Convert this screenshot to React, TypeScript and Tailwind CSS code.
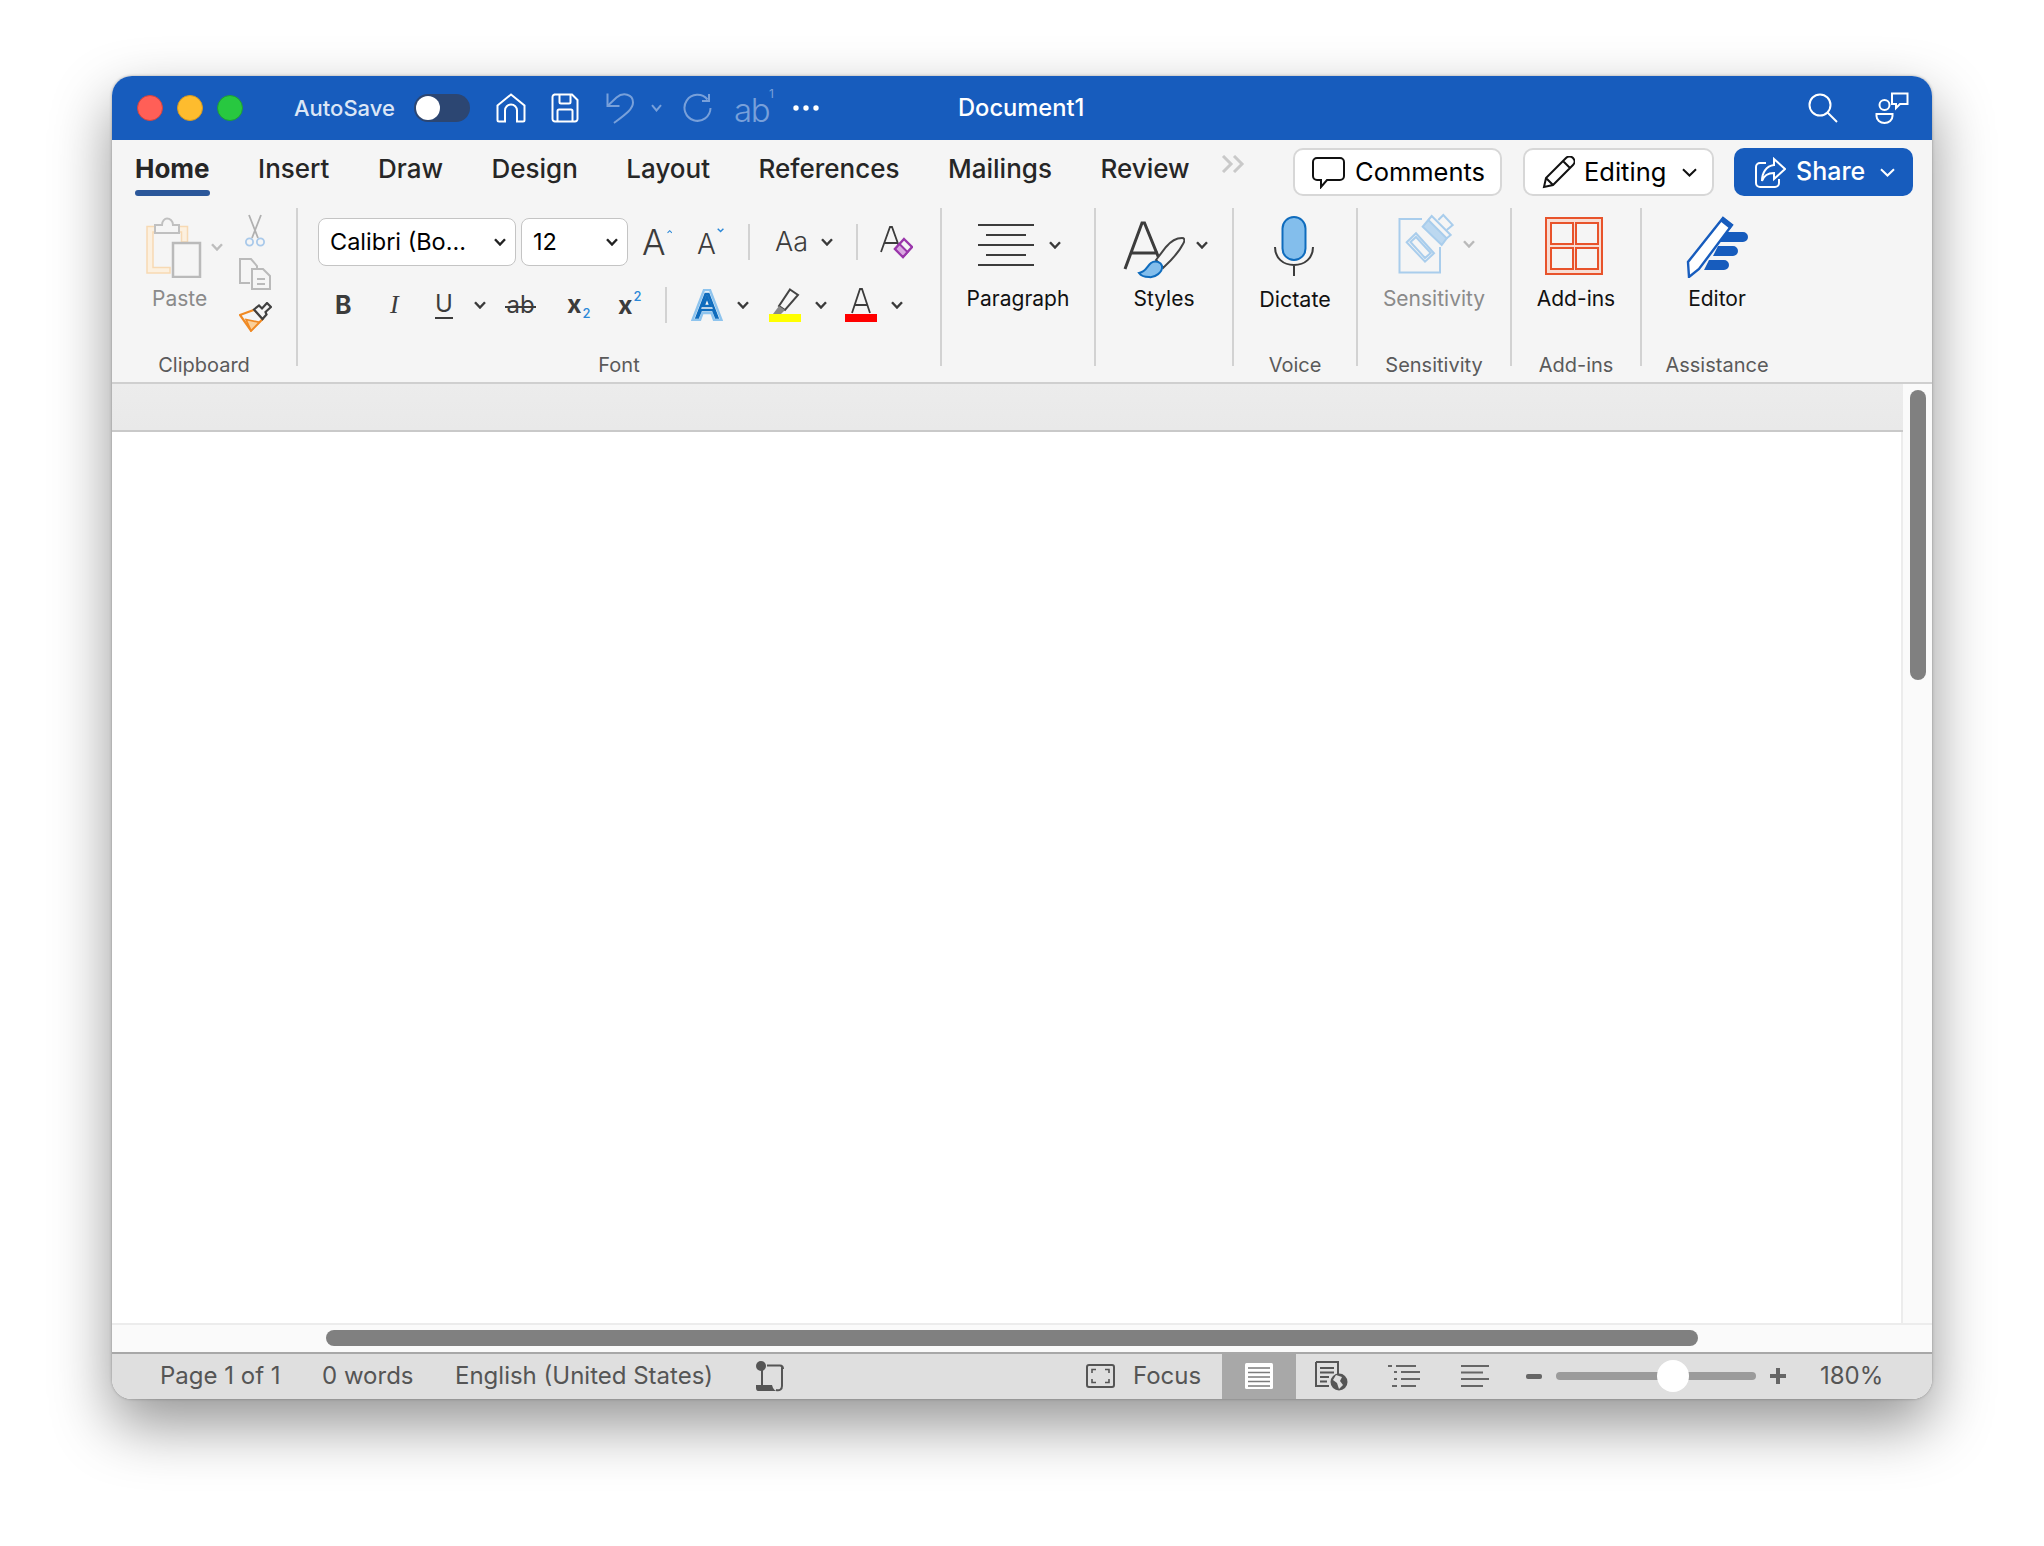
import type { ReactNode } from "react";

const TABS = ["Insert", "Draw", "Design", "Layout", "References", "Mailings", "Review"];

function Chev({ color = "#3a3a3a", w = 12, h = 8, sw = 2.4, className = "" }: { color?: string; w?: number; h?: number; sw?: number; className?: string }) {
  return (
    <svg width={w} height={h} viewBox={`0 0 ${w} ${h}`} className={`shrink-0 ${className}`} fill="none" stroke={color} strokeWidth={sw}>
      <path d={`M1 1.2 L${w / 2} ${h - 1.5} L${w - 1} 1.2`} />
    </svg>
  );
}

function Sep({ className = "" }: { className?: string }) {
  return <div className={`w-[2px] shrink-0 bg-[#d2d2d2] ${className}`} />;
}

function Group({ width, label, children }: { width: string; label?: string; children: ReactNode }) {
  return (
    <div className={`flex shrink-0 flex-col ${width}`}>
      <div className="h-[144px]">{children}</div>
      <div className="h-[26px] text-center text-[20px] leading-[26px] text-[#5a5a5a]">{label}</div>
    </div>
  );
}

function TitleIcons() {
  return (
    <>
      <svg width="30" height="30" viewBox="0 0 30 30" fill="none" stroke="#fff" strokeWidth="2" className="ml-[26px] shrink-0">
        <path d="M1.5 12.5 L15 1.5 L28.5 12.5 V27 a1.5 1.5 0 0 1 -1.5 1.5 H21 V17.5 a6 6 0 0 0 -12 0 V28.5 H3 a1.5 1.5 0 0 1 -1.5 -1.5 Z" />
      </svg>
      <svg width="28" height="30" viewBox="0 0 28 30" fill="none" stroke="#fff" strokeWidth="2" className="ml-[25px] shrink-0">
        <path d="M3 1.5 H21 L26.5 7 V26 a2.5 2.5 0 0 1 -2.5 2.5 H4 a2.5 2.5 0 0 1 -2.5 -2.5 V4 a2.5 2.5 0 0 1 2.5 -2.5 Z" />
        <path d="M8.5 1.5 V9 a1.5 1.5 0 0 0 1.5 1.5 H18 a1.5 1.5 0 0 0 1.5 -1.5 V1.5" />
        <path d="M6.5 28.5 V18 a1.5 1.5 0 0 1 1.5 -1.5 H20 a1.5 1.5 0 0 1 1.5 1.5 V28.5" />
      </svg>
      <svg width="28" height="32" viewBox="0 0 28 32" fill="none" stroke="#78a0da" strokeWidth="2" className="ml-[27px] shrink-0">
        <path d="M1.5 1.5 V14 H13.5" />
        <path d="M2 13.5 L10.5 5.5 C17 0 27 2 27 10.5 C27 17 20 22 8 31" />
      </svg>
      <Chev color="#78a0da" w={11} h={8} sw={2} className="ml-[17px]" />
      <svg width="29" height="30" viewBox="0 0 29 30" fill="none" stroke="#78a0da" strokeWidth="2" className="ml-[21px] shrink-0">
        <path d="M24.5 6.5 A13 13 0 1 0 27.5 15" />
        <path d="M26 1 V8 H19" />
      </svg>
      <div className="ml-[22px] flex w-[38px] shrink-0 items-start text-[#78a0da]">
        <span className="mt-[3px] text-[33px] font-light leading-[32px] tracking-[-1.5px]">ab</span>
        <span className="-mt-[4px] text-[12px] leading-[14px]">1</span>
      </div>
      <svg width="26" height="6" viewBox="0 0 26 6" fill="#fff" className="ml-[21px] shrink-0">
        <circle cx="3" cy="3" r="2.7" />
        <circle cx="13" cy="3" r="2.7" />
        <circle cx="23" cy="3" r="2.7" />
      </svg>
    </>
  );
}

function PasteIcon() {
  return (
    <svg width="56" height="62" viewBox="0 0 56 62" fill="none" className="shrink-0">
      <path d="M1 10.5 H41.5 V26 H35.5 V16 H7 V51.5 H24 V57 H1 Z" fill="#fcf0df" stroke="#f7d9b3" strokeWidth="1.5" />
      <path d="M9 17 V9 H16 C16 4.5 19 2.5 21 2.5 C24 2.5 27 5 27 9 H33 V17 Z" fill="#f5f5f5" stroke="#c0c0c0" strokeWidth="2" />
      <rect x="27" y="27" width="27" height="34" fill="#f5f5f5" stroke="#bababa" strokeWidth="2.5" />
    </svg>
  );
}

function SmallClipTools() {
  return (
    <div className="ml-[16px] flex w-[34px] flex-col items-center">
      <svg width="22" height="34" viewBox="0 0 22 34" fill="none" strokeWidth="1.8">
        <path d="M5 1 L14 24 M17 1 L8 24" stroke="#b0b0b0" />
        <circle cx="5.5" cy="28" r="3.6" stroke="#a9c9ea" />
        <circle cx="16.5" cy="28" r="3.6" stroke="#a9c9ea" />
      </svg>
      <svg width="32" height="32" viewBox="0 0 32 32" fill="none" stroke="#bababa" strokeWidth="2" className="mt-[10px]">
        <path d="M11 25 H1 V1 H12 L18 8 V11" />
        <path d="M13 11 H24 L31 18 V31 H13 Z" />
        <path d="M18 21 H26 M18 26 H26" />
      </svg>
      <svg width="33" height="30" viewBox="0 0 33 30" fill="none" className="mt-[12px]">
        <path d="M1 13 L15.3 7.7 L23.7 17 L12 28.7 Z" fill="#f5f5f5" stroke="#f08a24" strokeWidth="2.2" />
        <path d="M7 17.5 L20.3 20.3 L12 28.7 Z" fill="#fbd09a" stroke="#f08a24" strokeWidth="1.6" />
        <path d="M15 7.5 L20 3.5 L23 6.5 L28 1 L32 5 L26.5 10 L27.5 12.5 L23.5 17 Z" fill="#f5f5f5" stroke="#404040" strokeWidth="2.2" />
      </svg>
    </div>
  );
}

function Select({ width, text }: { width: string; text: string }) {
  return (
    <div className={`flex h-[48px] items-center justify-between rounded-[8px] border-[1.5px] border-[#c4c4c4] bg-white pl-[11px] pr-[9px] text-[23.5px] text-black ${width}`}>
      <span className="whitespace-nowrap">{text}</span>
      <Chev color="#222" />
    </div>
  );
}

function FontGroup() {
  return (
    <div className="flex flex-col pt-[10px]">
      <div className="flex h-[48px] items-center pl-[20px]">
        <Select width="w-[198px]" text="Calibri (Bo..." />
        <div className="w-[5px]" />
        <Select width="w-[107px]" text="12" />
        <div className="ml-[14px] flex w-[30px] items-start">
          <span className="text-[35px] font-light leading-[34px] text-[#3c3c3c]">A</span>
          <svg width="10" height="7" viewBox="0 0 10 7" fill="none" stroke="#2b88d8" strokeWidth="2" className="ml-[1px] mt-[3px]"><path d="M1 6 L5 2 L9 6" /></svg>
        </div>
        <div className="ml-[25px] flex w-[27px] items-start">
          <span className="mt-[3px] text-[28px] font-light leading-[30px] text-[#3c3c3c]">A</span>
          <svg width="10" height="7" viewBox="0 0 10 7" fill="none" stroke="#2b88d8" strokeWidth="2" className="ml-[1px] mt-[1px]"><path d="M1 1 L5 5 L9 1" /></svg>
        </div>
        <Sep className="ml-[24px] h-[36px]" />
        <span className="ml-[25px] w-[36px] whitespace-nowrap text-[27px] font-light text-[#3c3c3c]">Aa</span>
        <Chev className="ml-[10px]" />
        <Sep className="ml-[23px] h-[36px]" />
        <svg width="33" height="34" viewBox="0 0 33 34" fill="none" className="ml-[22px]">
          <path d="M1 27 L10 2 H12 L21 27 M4.5 18 H17.5" stroke="#3c3c3c" strokeWidth="1.8" />
          <path d="M24 14 L32 22 L23 32 L15 24 Z" fill="#f5f5f5" stroke="#9a36ab" strokeWidth="2.4" />
          <path d="M19.5 19 L27.5 27 L23 32 L15 24 Z" fill="#d9a8e0" stroke="#9a36ab" strokeWidth="2" />
        </svg>
      </div>
      <div className="mt-[19px] flex h-[40px] items-center pl-[37px]">
        <span className="w-[14px] text-[25px] font-bold leading-none text-[#3c3c3c]">B</span>
        <span className="ml-[41px] w-[14px] font-['Liberation_Serif',serif] text-[26px] italic leading-none text-[#3c3c3c]">I</span>
        <span className="ml-[31px] w-[18px] border-b-2 border-[#3c3c3c] text-center text-[24px] leading-[26px] text-[#3c3c3c]">U</span>
        <Chev className="ml-[21px]" />
        <span className="relative ml-[19px] w-[31px] text-center text-[24px] leading-[30px] text-[#3c3c3c]">
          ab
          <span className="absolute left-0 top-[16px] h-[1.5px] w-full bg-[#3c3c3c]" />
        </span>
        <span className="ml-[31px] flex w-[21px] items-start">
          <span className="text-[25px] font-bold leading-[28px] text-[#3c3c3c]">x</span>
          <span className="ml-[1px] mt-[16px] text-[13px] font-medium leading-[14px] text-[#2b88d8]">2</span>
        </span>
        <span className="ml-[30px] flex w-[21px] items-start">
          <span className="text-[25px] font-bold leading-[28px] text-[#3c3c3c]">x</span>
          <span className="ml-[1px] -mt-[2px] text-[13px] font-medium leading-[14px] text-[#2b88d8]">2</span>
        </span>
        <Sep className="ml-[26px] h-[36px]" />
        <svg width="32" height="32" viewBox="0 0 32 32" fill="none" className="ml-[24px]">
          <path d="M1.5 31 L13 1 H19 L30.5 31 H23 L20.5 24 H11.5 L9 31 Z" fill="#fff" stroke="#8ec4ee" strokeWidth="2.4" />
          <path d="M5.5 28.5 L14.5 5 H17.5 L26.5 28.5 H25 L22 21 H10 L7 28.5 Z M12.5 17 L16 8 L19.5 17 Z" fill="#f5f5f5" stroke="#0f6cbd" strokeWidth="2.4" />
        </svg>
        <Chev className="ml-[14px]" />
        <div className="ml-[20px] flex w-[32px] flex-col items-center">
          <svg width="30" height="26" viewBox="0 0 30 26" fill="none">
            <path d="M20 1.5 L28 7 L15 22 L9 18 Z" fill="#f5f5f5" stroke="#444" strokeWidth="2" />
            <path d="M9 18 L15 22 L11 26 H3 Z" fill="#8a8a8a" />
          </svg>
          <div className="h-[8px] w-[32px] bg-[#ffff00]" />
        </div>
        <Chev className="ml-[14px]" />
        <div className="ml-[18px] flex w-[32px] flex-col items-center">
          <svg width="22" height="26" viewBox="0 0 22 26" fill="none" stroke="#3c3c3c" strokeWidth="1.8">
            <path d="M2 25 L10 1 H12 L20 25 M5 17 H17" />
          </svg>
          <div className="h-[8px] w-[32px] bg-[#ff0000]" />
        </div>
        <Chev className="ml-[14px]" />
      </div>
    </div>
  );
}

function StatusIcons() {
  return (
    <>
      <svg width="29" height="24" viewBox="0 0 29 24" fill="none" stroke="#555" strokeWidth="2" className="shrink-0">
        <rect x="1" y="1" width="27" height="22" rx="2" />
        <path d="M6 9 V5.5 H10 M19 5.5 H23 V9 M6 15 V18.5 H10 M19 18.5 H23 V15" strokeWidth="1.6" />
      </svg>
      <span className="ml-[18px] w-[68px] whitespace-nowrap">Focus</span>
      <div className="ml-[21px] flex h-[46px] w-[74px] items-center justify-center bg-[#a8a8a8]">
        <svg width="28" height="26" viewBox="0 0 28 26" fill="#fff">
          <rect x="0" y="0" width="28" height="26" rx="1.5" />
          <path d="M3 5 H25 M3 9.5 H25 M3 14 H25 M3 18.5 H25 M3 23 H25" stroke="#7c7c7c" strokeWidth="1.7" />
        </svg>
      </div>
      <svg width="33" height="30" viewBox="0 0 33 30" fill="none" className="ml-[19px] shrink-0">
        <path d="M1 1 H23 V14 M1 1 V25 H14" stroke="#555" strokeWidth="2" />
        <path d="M5 7 H19 M5 11.5 H19 M5 16 H14 M5 20.5 H12" stroke="#555" strokeWidth="2" />
        <circle cx="24" cy="21" r="8.5" fill="#555" />
        <path d="M21 14 L27 16 L25 20 L28 24 L24 28 L22 22 L18 19 Z" fill="#dedede" />
      </svg>
      <svg width="32" height="24" viewBox="0 0 32 24" fill="none" stroke="#666" strokeWidth="2" className="ml-[40px] shrink-0">
        <path d="M0 2 H4 M8 2 H28 M6 8 H9 M13 8 H32 M6 15 H9 M13 15 H32 M4 22 H9 M13 22 H28" />
      </svg>
      <svg width="28" height="24" viewBox="0 0 28 24" fill="none" stroke="#666" strokeWidth="2.2" className="ml-[41px] shrink-0">
        <path d="M0 2 H28 M0 8.5 H22 M0 15 H28 M0 22 H22" />
      </svg>
    </>
  );
}

export default function App() {
  return (
    <div className="h-[1546px] w-[2044px] overflow-hidden bg-white pl-[112px] pt-[76px] font-['Inter',sans-serif]">
      <div className="flex h-[1323px] w-[1820px] flex-col overflow-hidden rounded-[20px] shadow-[0_26px_60px_rgba(0,0,0,0.42),0_0_3px_rgba(0,0,0,0.3)]">
        {/* TITLE BAR */}
        <div className="flex h-[64px] shrink-0 items-center bg-[#175cbd] text-white">
          <div className="ml-[25px] h-[26px] w-[26px] rounded-full border border-[#d8433b] bg-[#ff5f57]" />
          <div className="ml-[14px] h-[26px] w-[26px] rounded-full border border-[#d99a1e] bg-[#febc2e]" />
          <div className="ml-[14px] h-[26px] w-[26px] rounded-full border border-[#1e9d35] bg-[#28c840]" />
          <span className="ml-[51px] w-[101px] whitespace-nowrap text-[22px] font-medium text-[#dbe6f6]">AutoSave</span>
          <div className="ml-[19px] flex h-[28px] w-[56px] items-center rounded-full bg-[#2c4672] pl-[2px]">
            <div className="h-[24px] w-[24px] rounded-full bg-white" />
          </div>
          <TitleIcons />
          <span className="ml-[139px] w-[126px] whitespace-nowrap text-[23.7px] font-medium">Document1</span>
          <div className="flex-1" />
          <svg width="30" height="30" viewBox="0 0 30 30" fill="none" stroke="#fff" strokeWidth="2" className="shrink-0">
            <circle cx="12" cy="12" r="10.5" />
            <path d="M19.5 19.5 L29 29" />
          </svg>
          <svg width="34" height="32" viewBox="0 0 34 32" fill="none" stroke="#fff" strokeWidth="2" className="ml-[37px] mr-[23px] shrink-0">
            <circle cx="9.5" cy="13" r="5" />
            <path d="M1.5 22 H17.5 V24 A8 7 0 0 1 1.5 24 Z" />
            <path d="M17 1.5 H32.5 V12 H25 L21 16 V12 H17 Z" />
          </svg>
        </div>

        {/* RIBBON */}
        <div className="h-[244px] shrink-0 border-b-[2px] border-[#cfcfcf] bg-[#f5f5f5]">
          <div className="flex h-[68px] items-start pl-[23px] pr-[19px]">
            <div className="flex items-start gap-[48.5px] pt-[13px] text-[26px] font-medium leading-[32px] text-[#262626]">
              <div className="flex flex-col">
                <span className="font-bold">Home</span>
                <div className="mt-[5px] h-[6px] rounded-full bg-[#2b579a]" />
              </div>
              {TABS.map((t) => (
                <span key={t}>{t}</span>
              ))}
            </div>
            <svg width="24" height="18" viewBox="0 0 24 18" fill="none" stroke="#c9c9c9" strokeWidth="3" className="ml-[31px] mt-[15px] shrink-0">
              <path d="M2 1 L10 9 L2 17 M13 1 L21 9 L13 17" />
            </svg>
            <div className="ml-auto mt-[8px] flex items-start">
              <div className="flex h-[48px] w-[209px] items-center rounded-[10px] border-2 border-[#d7d7d7] bg-white pl-[17px] text-[25.5px] text-black">
                <svg width="33" height="33" viewBox="0 0 33 33" fill="none" stroke="#111" strokeWidth="2" className="shrink-0">
                  <path d="M5 2 H28 A4 4 0 0 1 32 6 V20 A4 4 0 0 1 28 24 H15 L9 31 V24 H5 A4 4 0 0 1 1 20 V6 A4 4 0 0 1 5 2 Z" />
                </svg>
                <span className="ml-[10px]">Comments</span>
              </div>
              <div className="ml-[21px] flex h-[48px] w-[191px] items-center rounded-[10px] border-2 border-[#d7d7d7] bg-white pl-[17px] text-[25.5px] text-black">
                <svg width="33" height="33" viewBox="0 0 33 33" fill="none" stroke="#111" strokeWidth="2" className="shrink-0">
                  <path d="M2 31 L4 22 L24 2 A3.5 3.5 0 0 1 31 9 L11 29 Z M4 22 L11 29 M21 5 L28 12" />
                </svg>
                <span className="ml-[9px]">Editing</span>
                <Chev color="#111" w={15} h={9} sw={2} className="ml-[16px]" />
              </div>
              <div className="ml-[20px] flex h-[48px] w-[179px] items-center rounded-[10px] bg-[#175cbd] pl-[21px] text-[25px] font-medium text-white">
                <svg width="31" height="31" viewBox="0 0 31 31" fill="none" stroke="#fff" strokeWidth="2" className="shrink-0">
                  <path d="M11 6 H5 A4 4 0 0 0 1 10 V26 A4 4 0 0 0 5 30 H20 A4 4 0 0 0 24 26 V22" />
                  <path d="M19 2 L30 12 L19 22 V16 C13 16 9 18 7 24 C7 16 11 9 19 8 Z" />
                </svg>
                <span className="ml-[10px]">Share</span>
                <Chev color="#fff" w={15} h={9} sw={2} className="ml-[15px]" />
              </div>
            </div>
          </div>

          <div className="flex h-[174px] items-start">
            <Group width="w-[184px]" label="Clipboard">
              <div className="flex pl-[34px] pt-[6px]">
                <div className="flex w-[76px] flex-col">
                  <div className="mt-[2px] flex items-start">
                    <PasteIcon />
                    <Chev color="#bdbdbd" className="ml-[9px] mt-[27px]" />
                  </div>
                  <span className="ml-[6px] mt-[8px] whitespace-nowrap text-[21px] leading-[26px] text-[#8a8a8a]">Paste</span>
                </div>
                <SmallClipTools />
              </div>
            </Group>
            <Sep className="h-[158px]" />
            <Group width="w-[642px]" label="Font">
              <FontGroup />
            </Group>
            <Sep className="h-[158px]" />
            <Group width="w-[152px]">
              <div className="flex flex-col items-center pt-[16px]">
                <div className="flex items-center pl-[2px]">
                  <svg width="56" height="42" viewBox="0 0 56 42" fill="none" stroke="#3c3c3c" strokeWidth="2">
                    <path d="M0 1 H56 M8 11 H48 M0 21 H56 M8 31 H48 M0 41 H56" />
                  </svg>
                  <Chev className="ml-[15px]" />
                </div>
                <span className="mt-[20px] text-[21px] leading-[26px] text-[#111]">Paragraph</span>
              </div>
            </Group>
            <Sep className="h-[158px]" />
            <Group width="w-[136px]">
              <div className="flex flex-col items-center pt-[8px]">
                <div className="flex items-center pl-[2px]">
                  <svg width="62" height="63" viewBox="0 0 62 63" fill="none">
                    <path d="M2 53 L19 7 H21.5 L37 45 M9 37 H35" stroke="#3c3c3c" strokeWidth="3" />
                    <path d="M33 44 L43 31 C48 25 54 22 59 22 C62 22 62 25 60 28 C57 34 52 41 40 52 Z" fill="#f5f5f5" stroke="#444" strokeWidth="2" />
                    <path d="M16 57 C23 56 24 50 28 47 C32 44 38 46 39 50 C40 56 32 62 26 61 C22 61 18 60 16 57 Z" fill="#83beec" stroke="#0f6cbd" strokeWidth="2" />
                  </svg>
                  <Chev className="ml-[11px] -mt-[6px]" />
                </div>
                <span className="mt-[7px] text-[21px] leading-[26px] text-[#111]">Styles</span>
              </div>
            </Group>
            <Sep className="h-[158px]" />
            <Group width="w-[122px]" label="Voice">
              <div className="flex flex-col items-center pt-[8px]">
                <svg width="40" height="61" viewBox="0 0 40 61" fill="none" className="mr-[2px]">
                  <rect x="8.5" y="1" width="23" height="43" rx="11.5" fill="#83beec" stroke="#0f6cbd" strokeWidth="2" />
                  <path d="M1 31 C1 42 9 49 20 49 C31 49 39 42 39 31 M20 49 V60" stroke="#3c3c3c" strokeWidth="2" />
                </svg>
                <span className="mt-[9px] text-[21.5px] leading-[26px] text-[#111]">Dictate</span>
              </div>
            </Group>
            <Sep className="h-[158px]" />
            <Group width="w-[152px]" label="Sensitivity">
              <div className="flex flex-col items-center pt-[5px]">
                <div className="flex items-center pl-[4px]">
                  <svg width="57" height="61" viewBox="0 0 57 61" fill="none" stroke="#a9cdec" strokeWidth="2">
                    <path d="M25 6 H2.5 V59.5 H43 V34" />
                    <path d="M9.7 29.3 L19 20.3 L37 40.3 L28 48.7 Z M13.5 29 L19 24 L33.7 40 L28 45 Z" />
                    <path d="M25.7 13.7 L31.3 7 L49.7 25.3 L44.7 32 Z" fill="#bcd8f0" />
                    <path d="M31.3 7 L34.7 3 L53.7 22 L49.7 25.3" />
                    <path d="M41.3 7 L46.3 2 L55.7 12 L49.7 17" />
                  </svg>
                  <Chev color="#b9b9b9" className="ml-[9px]" />
                </div>
                <span className="mt-[12px] text-[21px] leading-[26px] text-[#8a8a8a]">Sensitivity</span>
              </div>
            </Group>
            <Sep className="h-[158px]" />
            <Group width="w-[128px]" label="Add-ins">
              <div className="flex flex-col items-center pt-[9px]">
                <svg width="58" height="58" viewBox="0 0 58 58" fill="#f5f5f5" stroke="#e8532b" strokeWidth="2" className="mr-[5px]">
                  <rect x="1" y="1" width="56" height="56" fill="#f7ddd4" strokeWidth="2" />
                  <rect x="6" y="6" width="22" height="21" />
                  <rect x="31" y="6" width="22" height="21" />
                  <rect x="6" y="31" width="22" height="21" />
                  <rect x="31" y="31" width="22" height="21" />
                </svg>
                <span className="mt-[11px] text-[21px] leading-[26px] text-[#111]">Add-ins</span>
              </div>
            </Group>
            <Sep className="h-[158px]" />
            <Group width="w-[150px]" label="Assistance">
              <div className="flex flex-col items-center pt-[7px]">
                <svg width="62" height="63" viewBox="0 0 62 63" fill="none">
                  <path d="M38 17 H57 A5 5 0 0 1 57 27 H33 Z M32 31 H47 A5 5 0 0 1 47 41 H27 Z M23 45 H38 A5 5 0 0 1 38 55 H18 Z" fill="#175cbd" />
                  <path d="M3 62 L2 47 L37 3 L46 10 L13 54 Z" fill="#fff" stroke="#175cbd" strokeWidth="2.4" />
                  <path d="M37 2 L47 10 L44 14 L34 6 Z" fill="#175cbd" />
                </svg>
                <span className="mt-[8px] text-[21px] leading-[26px] text-[#111]">Editor</span>
              </div>
            </Group>
          </div>
        </div>

        {/* DOCUMENT */}
        <div className="flex min-h-0 flex-1">
          <div className="flex flex-1 flex-col">
            <div className="h-[48px] shrink-0 border-b-[2px] border-[#c9c9c9] bg-gradient-to-b from-[#ececec] to-[#e9e9e9]" />
            <div className="flex-1 border-r-2 border-[#ececec] bg-white" />
          </div>
          <div className="w-[29px] shrink-0 bg-[#fafafa] pl-[7px] pt-[6px]">
            <div className="h-[290px] w-[16px] rounded-full bg-[#808080]" />
          </div>
        </div>

        {/* H SCROLL */}
        <div className="h-[29px] shrink-0 border-t-2 border-[#ececec] bg-[#fafafa] pl-[214px] pt-[5px]">
          <div className="h-[16px] w-[1372px] rounded-full bg-[#808080]" />
        </div>

        {/* STATUS BAR */}
        <div className="flex h-[47px] shrink-0 items-center border-t-2 border-[#a8a8a8] bg-[#dfdfdf] pb-[1px] pl-[48px] text-[24px] text-[#555]">
          <span className="w-[120px] whitespace-nowrap">Page 1 of 1</span>
          <span className="ml-[42px] w-[89px] whitespace-nowrap">0 words</span>
          <span className="ml-[44px] w-[257px] whitespace-nowrap">English (United States)</span>
          <svg width="30" height="32" viewBox="0 0 30 32" fill="none" className="ml-[43px] shrink-0">
            <circle cx="6" cy="6" r="5" fill="#555" />
            <path d="M7 10 V25 M12 5.5 H25 C27 5.5 28 6.5 28 9 M27 6 V26 C27 29 25 31 21 30" stroke="#555" strokeWidth="2" />
            <path d="M1 25 H17 C18 29 20 31 22 31 H3 C2 31 1 30 1 28 Z" fill="#555" />
          </svg>
          <div className="w-[301px]" />
          <StatusIcons />
          <div className="ml-[37px] h-[5px] w-[16px] rounded-[2px] bg-[#666]" />
          <div className="ml-[14px] flex h-[8px] w-[200px] items-center rounded-full bg-[#9b9b9b] pl-[101px]">
            <div className="h-[32px] w-[32px] rounded-full bg-white" />
          </div>
          <svg width="16" height="16" viewBox="0 0 16 16" stroke="#666" strokeWidth="4" className="ml-[14px] shrink-0">
            <path d="M0 8 H16 M8 0 V16" />
          </svg>
          <span className="ml-[34px] whitespace-nowrap">180%</span>
        </div>
      </div>
    </div>
  );
}
